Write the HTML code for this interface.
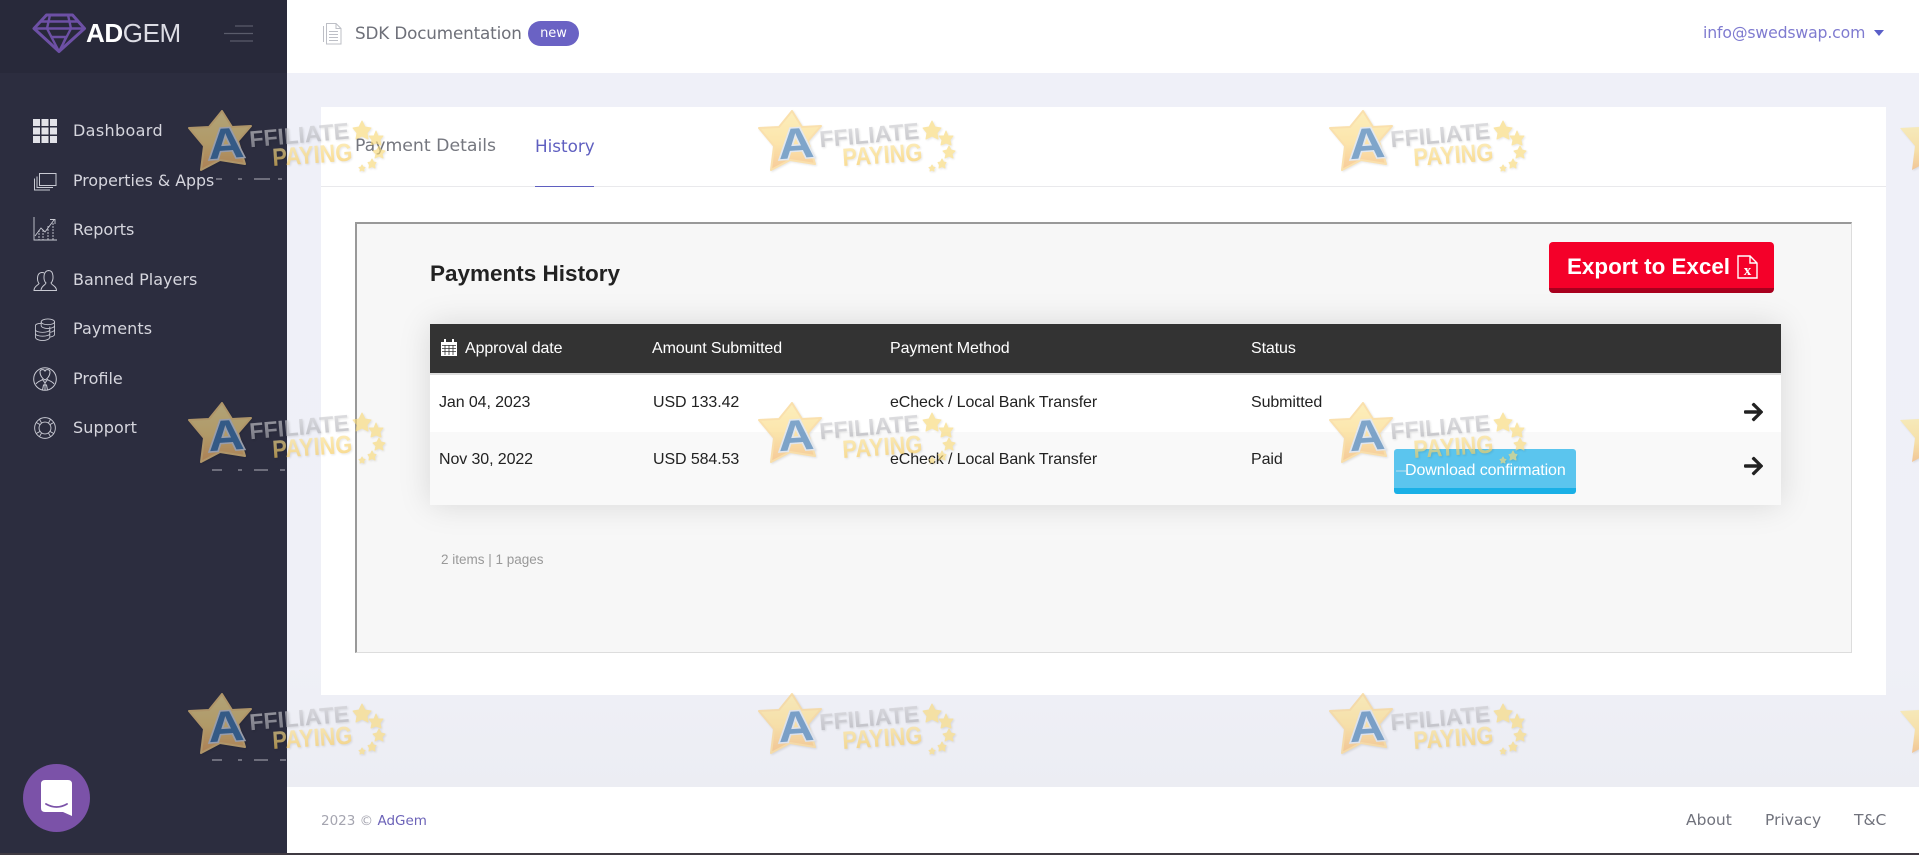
<!DOCTYPE html>
<html lang="en"><head><meta charset="utf-8"><title>AdGem - Payments History</title>
<style>
*{box-sizing:border-box;margin:0;padding:0}
html,body{width:1919px;height:855px;overflow:hidden;background:#eff0f7}
body{position:relative;font-family:"Liberation Sans",sans-serif}
.a{position:absolute;white-space:nowrap}
.p{font-family:"DejaVu Sans","Liberation Sans",sans-serif}
.nav{left:73px;color:#d6d6de;font-size:16px;line-height:20px;font-family:"DejaVu Sans",sans-serif}
.c{font-size:16px;line-height:20px;color:#222;letter-spacing:-.1px}
.h{font-size:16px;line-height:20px;color:#fff;top:339px;letter-spacing:-.1px}
svg{position:absolute}
.ff{font-family:"Liberation Sans",sans-serif;font-weight:700;font-size:23px;fill:url(#tg)}
.pp{font-family:"Liberation Sans",sans-serif;font-weight:700;font-size:25px;fill:url(#pg)}
.aa{font-family:"Liberation Sans",sans-serif;font-weight:700;font-size:43px;fill:#3a74ad;stroke:#d4dce6;stroke-width:3;paint-order:stroke}
</style></head><body>
<div class="a" style="left:0;top:0;width:287px;height:855px;background:#2c2d3f"></div>
<div class="a" style="left:0;top:0;width:287px;height:73px;background:#28293a"></div>
<div class="a" style="left:287px;top:0;width:1632px;height:73px;background:#fff"></div>
<div class="a" style="left:287px;top:73px;width:1632px;height:714px;background:linear-gradient(#eff0f8,#eff0f7 82%,#ecedf3)"></div>

<svg style="left:0;top:0" width="287" height="73" viewBox="0 0 287 73" fill="none">
<g stroke="#6d50a5" stroke-linejoin="round"><path stroke-width="3" d="M46.500 15H72.500L84.500 28.500 59 51.500 34 28.500Z"/><path stroke-width="2.400" d="M40 21.500H79M34 28.500H84.500M50 15 47 28.500 59 51.500 71 28.500 68 15"/><path stroke-width="2.400" d="M51 37H66L63 44"/></g>
<g stroke="#5a5c6b" stroke-width="1.200"><path d="M235 26H253M224 33.500H253M230 41H253"/></g>
</svg>
<div class="a" style="left:86px;top:16px;font-size:26px;line-height:34px;color:#fff;letter-spacing:-.4px"><b style="font-weight:700">AD</b><span style="color:#dcdce4">GEM</span></div>

<svg style="left:323px;top:22px" width="19" height="23" viewBox="0 0 19 23" fill="none" stroke="#bdbfc6" stroke-width="1"><path d="M3.500 1.500H13L18 6.500V22H3.500ZM13 1.500V6.500H18M.5 4V20M6 9.500H15M6 12.500H15M6 15.500H15M6 18.500H15"/></svg>
<div class="a p" style="left:355px;top:23px;font-size:16.800px;line-height:20px;color:#6e7079;letter-spacing:-.15px">SDK Documentation</div>
<div class="a p" style="left:528px;top:21px;width:51px;height:25px;border-radius:13px;background:#6a62c4;color:#fff;font-size:13px;line-height:25px;text-align:center">new</div>
<div class="a p" style="left:1703px;top:23px;font-size:15.700px;line-height:20px;color:#7f7bd0;letter-spacing:-.15px">info@swedswap.com</div>
<svg style="left:1874px;top:30px" width="10" height="6" viewBox="0 0 10 6"><path d="M0 0H10L5 6Z" fill="#5a5fc8"/></svg>

<!-- nav -->
<svg style="left:33px;top:119px" width="24" height="24" viewBox="0 0 24 24" fill="#e2e2e8"><path d="M0 0h7v7H0zM8.500 0h7v7h-7zM17 0h7v7h-7zM0 8.500h7v7H0zM8.500 8.500h7v7h-7zM17 8.500h7v7h-7zM0 17h7v7H0zM8.500 17h7v7h-7zM17 17h7v7h-7z"/></svg>
<div class="a nav" style="top:121px;letter-spacing:.35px">Dashboard</div>
<svg style="left:33px;top:172px" width="24" height="19" viewBox="0 0 24 19" fill="none" stroke="#c9cad3"><path d="M6.500 1.500H23V13.500H6.500Z"/><path d="M4 4.500V15.500H20M1.500 6.500V18H17"/></svg>
<div class="a nav" style="top:171px;font-size:15.800px">Properties &amp; Apps</div>
<svg style="left:33px;top:217px" width="24" height="24" viewBox="0 0 24 24" fill="none" stroke="#c9cad3" stroke-width=".9"><path d="M1 0V23H24M2 19 8 11 12 15 21 3M17 2.500H22V7"/><path d="M6 13V23M10 13V23M15 9V23M20 6V23" stroke-dasharray="2 1"/></svg>
<div class="a nav" style="top:220px">Reports</div>
<svg style="left:33px;top:269px" width="24" height="22" viewBox="0 0 24 22" fill="none" stroke="#c9cad3"><path d="M8 21.500C8 17 12 16.500 13 14 10 11 10 2 15.500 1.500 21 1.500 21 11 18 14 19 16.500 23.500 17 23.500 21.500Z"/><path d="M7.500 21.500H1C1 17 5 16.500 6 14.500 3.500 11 4 4 8.500 3.500 9.500 3.400 10.500 3.500 11 4"/></svg>
<div class="a nav" style="top:270px">Banned Players</div>
<svg style="left:34px;top:318px" width="22" height="23" viewBox="0 0 22 24" fill="none" stroke="#c9cad3" stroke-width=".9"><ellipse cx="14" cy="4" rx="7" ry="3"/><path d="M7 4V8C7 9.500 10 11 14 11S21 9.500 21 8V4M21 8V17C21 18.500 19 19.500 16 20M21 12C21 13.500 19 14.500 16 15M1 8C1 6.500 4 5.500 7 5.500M1 8V20C1 22 4.500 23.500 8.500 23.500S16 22 16 20V9M1 12C1 14 4.500 15 8.500 15S16 14 16 12M1 16C1 18 4.500 19 8.500 19S16 18 16 16"/></svg>
<div class="a nav" style="top:319px;letter-spacing:.1px">Payments</div>
<svg style="left:33px;top:367px" width="24" height="24" viewBox="0 0 24 24" fill="none" stroke="#c9cad3"><circle cx="12" cy="12" r="11.300"/><path d="M7 5C7 2 11 2 12 4 13 2 17 2 17 5 17 9 14 12 12 13 10 12 7 9 7 5ZM3 17C5 14 8 14 9.500 12.500L12 16 14.500 12.500C16 14 19 14 21 17M12 16V23M9.500 23 10.500 18H13.500L14.500 23"/></svg>
<div class="a nav" style="top:369px">Profile</div>
<svg style="left:34px;top:417px" width="22" height="22" viewBox="0 0 24 24" fill="none" stroke="#c9cad3"><circle cx="12" cy="12" r="11.300"/><circle cx="12" cy="12" r="6.500"/><path d="M2.500 6 7 8.500M6 2.500 8.500 7M18 2.500 15.500 7M21.500 6 17 8.500M2.500 18 7 15.500M6 21.500 8.500 17M18 21.500 15.500 17M21.500 18 17 15.500"/></svg>
<div class="a nav" style="top:418px;letter-spacing:.1px">Support</div>

<!-- card -->
<div class="a" style="left:321px;top:107px;width:1565px;height:588px;background:#fff"></div>
<div class="a" style="left:321px;top:186px;width:1565px;height:1px;background:#e9e9ec"></div>
<div class="a p" style="left:355px;top:136px;font-size:17.300px;line-height:21px;color:#75777f">Payment Details</div>
<div class="a p" style="left:535px;top:136px;font-size:16.800px;line-height:20px;color:#5f5fc0">History</div>
<div class="a" style="left:535px;top:186px;width:59px;height:1px;background:#5f5fc0"></div>

<div class="a" style="left:355px;top:222px;width:1497px;height:431px;background:#f7f7f7;border-top:2px solid #999;border-left:2px solid #999;border-right:1px solid #ddd;border-bottom:1px solid #ddd"></div>
<div class="a" style="left:430px;top:260px;font-size:22.500px;line-height:28px;font-weight:700;color:#222">Payments History</div>

<div class="a" style="left:1549px;top:242px;width:225px;height:51px;border-radius:4px;background:#f40029;border-bottom:5px solid #a8001e"></div>
<div class="a" style="left:1567px;top:253px;font-size:22.400px;line-height:28px;font-weight:700;color:#fff">Export to Excel</div>
<svg style="left:1737px;top:255px" width="21" height="24" viewBox="0 0 21 24" fill="none" stroke="#fff" stroke-width="1.400"><path d="M1 1H13L20 8V23H1ZM13 1V8H20"/><text x="10.500" y="20" font-family="Liberation Serif,serif" font-size="15" font-weight="700" fill="#fff" stroke="none" text-anchor="middle">x</text></svg>

<!-- table -->
<div class="a" style="left:430px;top:324px;width:1351px;height:181px;background:#f9f9f9;box-shadow:0 0 30px rgba(0,0,0,.13)"></div>
<div class="a" style="left:430px;top:324px;width:1351px;height:49px;background:#333"></div>
<div class="a" style="left:430px;top:373px;width:1351px;height:2px;background:#ddd"></div>
<div class="a" style="left:430px;top:375px;width:1351px;height:57px;background:#fff"></div>
<svg style="left:441px;top:339px" width="16" height="17" viewBox="0 0 16 17"><path d="M0 3h16v14H0z" fill="#fff"/><path d="M3 0h2v4H3zM11 0h2v4h-2z" fill="#fff"/><path d="M1 6.500h14M1 9.500h14M1 12.500h14M4 6v10M8 6v10M12 6v10" stroke="#333" stroke-width=".8" fill="none"/></svg>
<div class="a h" style="left:465px">Approval date</div>
<div class="a h" style="left:652px">Amount Submitted</div>
<div class="a h" style="left:890px">Payment Method</div>
<div class="a h" style="left:1251px">Status</div>

<div class="a c" style="left:439px;top:393px">Jan 04, 2023</div>
<div class="a c" style="left:653px;top:393px">USD 133.42</div>
<div class="a c" style="left:890px;top:393px">eCheck / Local Bank Transfer</div>
<div class="a c" style="left:1251px;top:393px">Submitted</div>
<div class="a c" style="left:439px;top:450px">Nov 30, 2022</div>
<div class="a c" style="left:653px;top:450px">USD 584.53</div>
<div class="a c" style="left:890px;top:450px">eCheck / Local Bank Transfer</div>
<div class="a c" style="left:1251px;top:450px">Paid</div>
<div class="a" style="left:1394px;top:449px;width:182px;height:45px;border-radius:3px;background:#5bc5ee;border-bottom:6px solid #1ab0e6"></div>
<div class="a" style="left:1405px;top:461px;font-size:16px;line-height:20px;color:#fff;letter-spacing:-.1px">Download confirmation</div>
<svg style="left:1744px;top:401px" width="19" height="22" viewBox="0 0 448 512"><path fill="#222" d="M190.500 66.900l22.200-22.200c9.400-9.400 24.600-9.400 33.900 0L441 239c9.400 9.400 9.400 24.600 0 33.900L246.600 467.300c-9.400 9.400-24.600 9.400-33.900 0l-22.200-22.200c-9.500-9.500-9.300-25 .4-34.300L311.400 296H24c-13.300 0-24-10.700-24-24v-32c0-13.300 10.700-24 24-24h287.400L190.900 101.200c-9.800-9.300-10-24.800-.4-34.300z"/></svg>
<svg style="left:1744px;top:455px" width="19" height="22" viewBox="0 0 448 512"><path fill="#222" d="M190.500 66.900l22.200-22.200c9.400-9.400 24.600-9.400 33.900 0L441 239c9.400 9.400 9.400 24.600 0 33.900L246.600 467.300c-9.400 9.400-24.600 9.400-33.900 0l-22.200-22.200c-9.500-9.500-9.300-25 .4-34.300L311.400 296H24c-13.300 0-24-10.700-24-24v-32c0-13.300 10.700-24 24-24h287.400L190.900 101.200c-9.800-9.300-10-24.800-.4-34.300z"/></svg>
<div class="a" style="left:441px;top:551px;font-size:13.500px;line-height:18px;color:#999">2 items | 1 pages</div>

<!-- footer -->
<div class="a" style="left:287px;top:787px;width:1632px;height:66px;background:#fff"></div>
<div class="a" style="left:0;top:853px;width:1919px;height:2px;background:#3f3a42"></div>
<div class="a p" style="left:321px;top:812px;font-size:13.500px;line-height:18px;color:#a5a5b0">2023 © <span style="color:#6c63b8">AdGem</span></div>
<div class="a p" style="left:1686px;top:810px;font-size:15.500px;line-height:20px;color:#70727c">About</div>
<div class="a p" style="left:1765px;top:810px;font-size:15.500px;line-height:20px;color:#70727c">Privacy</div>
<div class="a p" style="left:1854px;top:810px;font-size:15.500px;line-height:20px;color:#70727c">T&amp;C</div>

<!-- chat -->
<div class="a" style="left:23px;top:764px;width:67px;height:68px;border-radius:50%;background:#7b52a8"></div>
<svg style="left:41px;top:780px" width="32" height="36" viewBox="0 0 32 36"><path d="M4 0H27Q31 0 31 4V36L22 32H4Q0 32 0 28V4Q0 0 4 0Z" fill="#fff"/><path d="M5 24Q15.500 30 26 24" fill="none" stroke="#7b52a8" stroke-width="1.800" stroke-linecap="round"/></svg>

<!-- watermark overlay -->
<svg style="left:0;top:0;overflow:hidden" width="1919" height="855" viewBox="0 0 1919 855">
<defs>
<linearGradient id="sg" x1="0" y1="0" x2="0" y2="1"><stop offset="0" stop-color="#fbe698"/><stop offset=".55" stop-color="#fad67e"/><stop offset="1" stop-color="#f3ae62"/></linearGradient>
<linearGradient id="tg" x1="0" y1="0" x2="0" y2="1"><stop offset="0" stop-color="#d2d2d6"/><stop offset="1" stop-color="#a4a4aa"/></linearGradient>
<linearGradient id="pg" x1="0" y1="0" x2="0" y2="1"><stop offset="0" stop-color="#fbe59a"/><stop offset="1" stop-color="#f4c248"/></linearGradient>
<g id="wm">
<polygon points="35,1 45,17 64,16 51,31 58,54 33,50 14,60 17,36 2,18 22,17" fill="url(#sg)" stroke="#f8d080" stroke-width="2" stroke-linejoin="round"/>
<g fill="#f8d878" stroke="#f8d878" stroke-width="1" stroke-linejoin="round"><polygon points="175,11 178,17 184,18 180,23 181,29 175,26 169,29 170,23 166,18 172,17"/><polygon points="189,21 191,26 196,26 193,30 194,35 189,33 184,35 185,30 182,26 187,26"/><polygon points="192,36 194,40 198,41 195,44 196,48 192,46 188,48 189,44 186,41 190,40"/><polygon points="185,49 186.500,52 189,52.500 187.500,55 188,58 185,56.500 182,58 182.500,55 181,52.500 183.500,52"/><polygon points="175,55 176,57 178,57.500 176.500,59 177,61 175,60 173,61 173.500,59 172,57.500 174,57"/></g>
</g>
</defs>
<g opacity=".65" style="filter:drop-shadow(1px 1px 1px rgba(0,0,0,.16))">
<g transform="translate(187,110)"><use href="#wm"/><text class="ff" transform="rotate(-5 66 36)" x="63" y="37" textLength="100" lengthAdjust="spacingAndGlyphs">FFILIATE</text><text class="pp" transform="rotate(-4 86 56)" x="86" y="56" textLength="80" lengthAdjust="spacingAndGlyphs">PAYING</text><text class="aa" transform="rotate(-4 40 48)" x="22" y="48" textLength="36" lengthAdjust="spacingAndGlyphs">A</text></g>
<g transform="translate(757,110)"><use href="#wm"/><text class="ff" transform="rotate(-5 66 36)" x="63" y="37" textLength="100" lengthAdjust="spacingAndGlyphs">FFILIATE</text><text class="pp" transform="rotate(-4 86 56)" x="86" y="56" textLength="80" lengthAdjust="spacingAndGlyphs">PAYING</text><text class="aa" transform="rotate(-4 40 48)" x="22" y="48" textLength="36" lengthAdjust="spacingAndGlyphs">A</text></g>
<g transform="translate(1328,110)"><use href="#wm"/><text class="ff" transform="rotate(-5 66 36)" x="63" y="37" textLength="100" lengthAdjust="spacingAndGlyphs">FFILIATE</text><text class="pp" transform="rotate(-4 86 56)" x="86" y="56" textLength="80" lengthAdjust="spacingAndGlyphs">PAYING</text><text class="aa" transform="rotate(-4 40 48)" x="22" y="48" textLength="36" lengthAdjust="spacingAndGlyphs">A</text></g>
<polygon transform="translate(1898,110)" points="21,17 2,18 17,36 14,60 21,56.300" fill="url(#sg)"/>
<g transform="translate(187,402)"><use href="#wm"/><text class="ff" transform="rotate(-5 66 36)" x="63" y="37" textLength="100" lengthAdjust="spacingAndGlyphs">FFILIATE</text><text class="pp" transform="rotate(-4 86 56)" x="86" y="56" textLength="80" lengthAdjust="spacingAndGlyphs">PAYING</text><text class="aa" transform="rotate(-4 40 48)" x="22" y="48" textLength="36" lengthAdjust="spacingAndGlyphs">A</text></g>
<g transform="translate(757,402)"><use href="#wm"/><text class="ff" transform="rotate(-5 66 36)" x="63" y="37" textLength="100" lengthAdjust="spacingAndGlyphs">FFILIATE</text><text class="pp" transform="rotate(-4 86 56)" x="86" y="56" textLength="80" lengthAdjust="spacingAndGlyphs">PAYING</text><text class="aa" transform="rotate(-4 40 48)" x="22" y="48" textLength="36" lengthAdjust="spacingAndGlyphs">A</text></g>
<g transform="translate(1328,402)"><use href="#wm"/><text class="ff" transform="rotate(-5 66 36)" x="63" y="37" textLength="100" lengthAdjust="spacingAndGlyphs">FFILIATE</text><text class="pp" transform="rotate(-4 86 56)" x="86" y="56" textLength="80" lengthAdjust="spacingAndGlyphs">PAYING</text><text class="aa" transform="rotate(-4 40 48)" x="22" y="48" textLength="36" lengthAdjust="spacingAndGlyphs">A</text></g>
<polygon transform="translate(1898,402)" points="21,17 2,18 17,36 14,60 21,56.300" fill="url(#sg)"/>
<g transform="translate(187,693)"><use href="#wm"/><text class="ff" transform="rotate(-5 66 36)" x="63" y="37" textLength="100" lengthAdjust="spacingAndGlyphs">FFILIATE</text><text class="pp" transform="rotate(-4 86 56)" x="86" y="56" textLength="80" lengthAdjust="spacingAndGlyphs">PAYING</text><text class="aa" transform="rotate(-4 40 48)" x="22" y="48" textLength="36" lengthAdjust="spacingAndGlyphs">A</text></g>
<g transform="translate(757,693)"><use href="#wm"/><text class="ff" transform="rotate(-5 66 36)" x="63" y="37" textLength="100" lengthAdjust="spacingAndGlyphs">FFILIATE</text><text class="pp" transform="rotate(-4 86 56)" x="86" y="56" textLength="80" lengthAdjust="spacingAndGlyphs">PAYING</text><text class="aa" transform="rotate(-4 40 48)" x="22" y="48" textLength="36" lengthAdjust="spacingAndGlyphs">A</text></g>
<g transform="translate(1328,693)"><use href="#wm"/><text class="ff" transform="rotate(-5 66 36)" x="63" y="37" textLength="100" lengthAdjust="spacingAndGlyphs">FFILIATE</text><text class="pp" transform="rotate(-4 86 56)" x="86" y="56" textLength="80" lengthAdjust="spacingAndGlyphs">PAYING</text><text class="aa" transform="rotate(-4 40 48)" x="22" y="48" textLength="36" lengthAdjust="spacingAndGlyphs">A</text></g>
<polygon transform="translate(1898,693)" points="21,17 2,18 17,36 14,60 21,56.300" fill="url(#sg)"/>
</g>
<path d="M216 179H222M238 179H242M254 179H270M278 179H282M212 470H222M238 470H242M254 470H268M280 470H285M212 760H222M238 760H242M254 760H268M280 760H286M1396 471H1406" stroke="#e8e8ee" stroke-width="1" fill="none" opacity=".7"/>
</svg>
</body></html>
